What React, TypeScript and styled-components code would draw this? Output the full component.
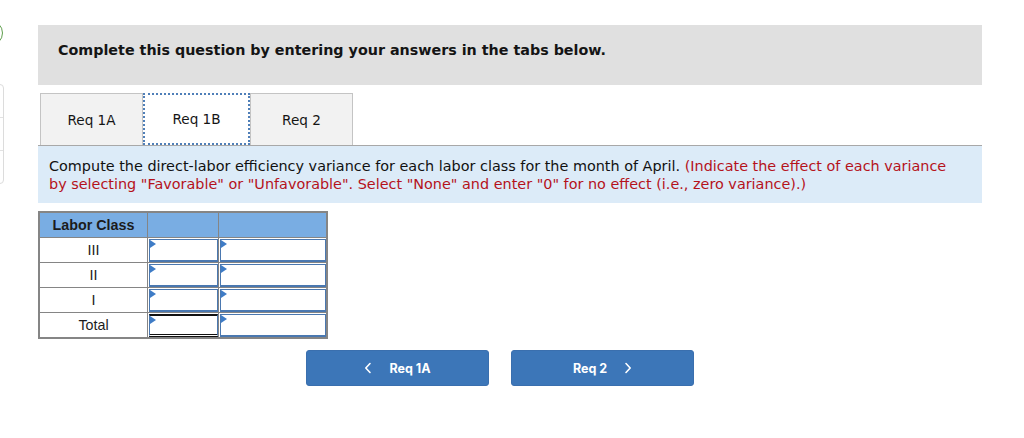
import React from "react";
import styled, { createGlobalStyle, css } from "styled-components";

const GlobalStyle = createGlobalStyle`
  html, body { margin: 0; padding: 0; background: #ffffff; }
  body { overflow: hidden; }
`;

const Page = styled.div`
  display: flex;
  padding-top: 20px;
  width: 1024px;
  height: 438px;
  box-sizing: border-box;
  overflow: hidden;
`;

const Gutter = styled.div`
  flex: none;
  width: 38px;
  display: flex;
  flex-direction: column;
`;

const GreenPill = styled.div`
  margin-left: -30px;
  width: 31px;
  height: 24px;
  border: 1px solid #5e9e4c;
  border-radius: 13px;
`;

const SideMenu = styled.div`
  margin-top: 38px;
  margin-left: -40px;
  width: 42px;
  border: 1px solid #dcdcdc;
  border-radius: 4px;
  display: flex;
  flex-direction: column;
`;

const SideItem = styled.div<{ $last?: boolean }>`
  height: 32px;
  border-bottom: ${(p) => (p.$last ? "none" : "1px solid #e2e2e2")};
`;

const Main = styled.div`
  flex: none;
  width: 944px;
  padding-top: 5px;
  display: flex;
  flex-direction: column;
`;

const Header = styled.div`
  box-sizing: border-box;
  height: 60px;
  background: #e0e0e0;
  padding: 15px 0 0 20px;
  font-family: "DejaVu Sans", Verdana, sans-serif;
  font-weight: bold;
  font-size: 14.3px;
  line-height: 20px;
  color: #141414;
`;

const Tabs = styled.div`
  margin-top: 8px;
  margin-left: 2px;
  display: flex;
  height: 52px;
`;

const Tab = styled.div<{ $active?: boolean }>`
  box-sizing: border-box;
  width: ${(p) => (p.$active ? "107px" : "103px")};
  height: 52px;
  display: flex;
  align-items: center;
  justify-content: center;
  font-family: "DejaVu Sans", Verdana, sans-serif;
  font-size: 13.6px;
  color: #151515;
  background: #f2f2f2;
  border: 1px solid #c4c4c4;
  border-bottom: none;
  ${(p) =>
    p.$active &&
    css`
      background: #ffffff;
      border: 2px dotted #4f7fb8;
    `}
`;

const Instructions = styled.div`
  background: #dcebf8;
  border-top: 1px solid #a8a8a8;
  padding: 11px 20px 10px 11px;
  font-family: "DejaVu Sans", Verdana, sans-serif;
  font-size: 14.4px;
  line-height: 18px;
  color: #111111;
`;

const Red = styled.span`
  color: #b5121b;
`;

const Table = styled.table`
  margin-top: 8px;
  border-collapse: collapse;
  border: 2px solid #858585;
  font-family: "Liberation Sans", Arial, sans-serif;
  font-size: 14.3px;
  color: #1c1c1c;
  table-layout: fixed;
  width: 288px;
`;

const HeadCell = styled.th<{ $w: number }>`
  width: ${(p) => p.$w}px;
  height: 24px;
  padding: 0;
  background: #79ade3;
  border: 1px solid #858585;
  font-weight: bold;
  text-align: center;
  color: #1c1c1c;
`;

const LabelCell = styled.td`
  height: 24px;
  padding: 0;
  border: 1px solid #858585;
  text-align: center;
  background: #ffffff;
`;

const InputCell = styled.td`
  padding: 1px 0 0 1px;
  border: 1px solid #858585;
  background: #ffffff;
  height: 24px;
  box-sizing: border-box;
`;

const InputBox = styled.div<{ $top?: boolean; $double?: boolean }>`
  position: relative;
  box-sizing: border-box;
  height: 23px;
  border: 1px solid #4a78b0;
  border-top: ${(p) => (p.$top ? "2px solid #111" : "1px solid #4a78b0")};
  border-bottom: ${(p) => (p.$double ? "3px double #111" : "2px solid #4a78b0")};
  background: #ffffff;
`;

const Marker = styled.span`
  position: absolute;
  left: 0;
  top: 0;
  width: 0;
  height: 0;
  border-left: 6px solid #3f7cc6;
  border-top: 4px solid transparent;
  border-bottom: 4px solid transparent;
`;

const Nav = styled.div`
  margin-top: 11px;
  padding-left: 268px;
  display: flex;
  gap: 22px;
`;

const NavButton = styled.button`
  box-sizing: border-box;
  width: 183px;
  height: 36px;
  background: #3c76b8;
  border: 1px solid #3a6fae;
  border-radius: 3px;
  color: #ffffff;
  font-family: Inter, Roboto, sans-serif;
  font-weight: bold;
  font-size: 12.5px;
  display: flex;
  align-items: center;
  justify-content: center;
  gap: 17px;
  padding: 0;
`;

const Chevron = ({ dir }: { dir: "left" | "right" }) => (
  <svg width="8" height="12" viewBox="0 0 8 12" fill="none">
    <polyline
      points={dir === "left" ? "6,1.5 1.8,6 6,10.5" : "2,1.5 6.2,6 2,10.5"}
      stroke="#ffffff"
      strokeWidth="1.6"
      strokeLinecap="round"
      strokeLinejoin="round"
    />
  </svg>
);

const rows = ["III", "II", "I", "Total"];

export default function App() {
  return (
    <>
      <GlobalStyle />
      <Page>
        <Gutter>
          <GreenPill />
          <SideMenu>
            <SideItem />
            <SideItem />
            <SideItem $last />
          </SideMenu>
        </Gutter>
        <Main>
          <Header>Complete this question by entering your answers in the tabs below.</Header>
          <Tabs>
            <Tab>Req 1A</Tab>
            <Tab $active>Req 1B</Tab>
            <Tab>Req 2</Tab>
          </Tabs>
          <Instructions>
            Compute the direct-labor efficiency variance for each labor class for the month of April.{" "}
            <Red>
              (Indicate the effect of each variance by selecting "Favorable" or "Unfavorable". Select "None" and
              enter "0" for no effect (i.e., zero variance).)
            </Red>
          </Instructions>
          <Table>
            <thead>
              <tr>
                <HeadCell $w={107}>Labor Class</HeadCell>
                <HeadCell $w={70}></HeadCell>
                <HeadCell $w={107}></HeadCell>
              </tr>
            </thead>
            <tbody>
              {rows.map((r) => (
                <tr key={r}>
                  <LabelCell>{r}</LabelCell>
                  <InputCell>
                    <InputBox $top={r === "Total"} $double={r === "Total"}>
                      <Marker />
                    </InputBox>
                  </InputCell>
                  <InputCell>
                    <InputBox>
                      <Marker />
                    </InputBox>
                  </InputCell>
                </tr>
              ))}
            </tbody>
          </Table>
          <Nav>
            <NavButton>
              <Chevron dir="left" />
              <span>Req 1A</span>
            </NavButton>
            <NavButton>
              <span>Req 2</span>
              <Chevron dir="right" />
            </NavButton>
          </Nav>
        </Main>
      </Page>
    </>
  );
}
